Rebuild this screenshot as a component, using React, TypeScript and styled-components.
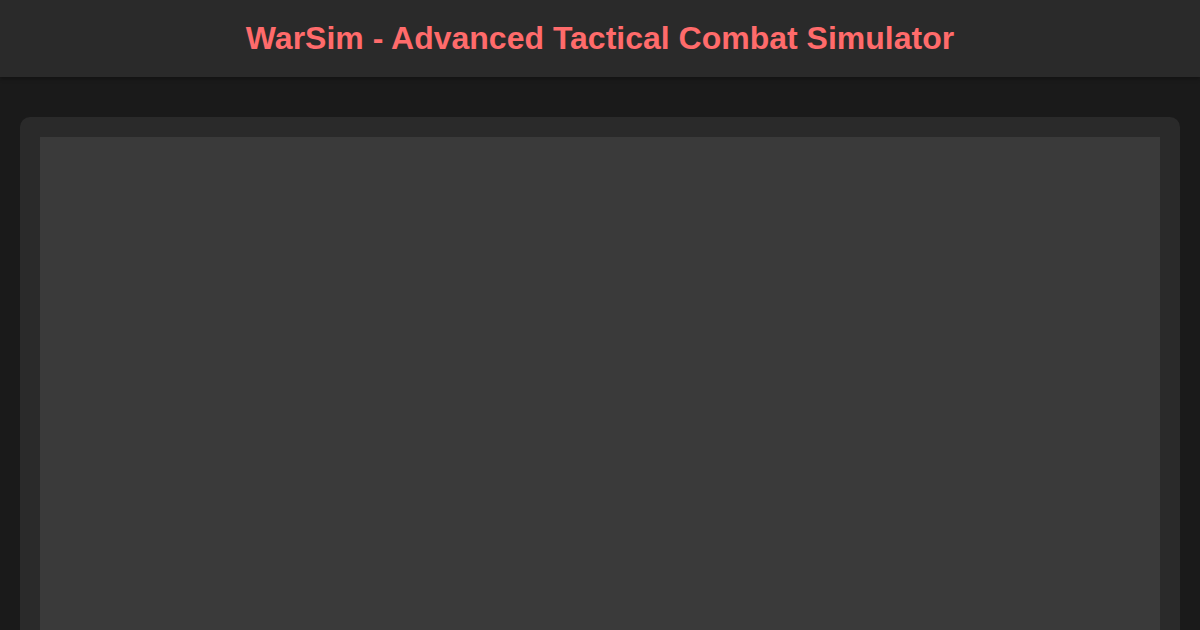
import React from "react";
import styled, { createGlobalStyle } from "styled-components";

const GlobalStyle = createGlobalStyle`
  html, body {
    margin: 0;
    padding: 0;
    background-color: #1a1a1a;
    font-family: "Liberation Sans", Arial, sans-serif;
    color: #ffffff;
  }
`;

const Header = styled.header`
  background-color: #2a2a2a;
  padding: 20px;
  text-align: center;
  box-shadow: 0 2px 4px rgba(0, 0, 0, 0.3);
  position: relative;
  z-index: 1;
`;

const Title = styled.h1`
  margin: 0;
  font-size: 32px;
  font-weight: bold;
  color: #ff6b6b;
`;

const Main = styled.main`
  padding: 40px 20px 20px;
`;

const BattlefieldCard = styled.section`
  background-color: #2a2a2a;
  border-radius: 10px;
  padding: 20px;
`;

const Battlefield = styled.div`
  background-color: #3a3a3a;
  height: 600px;
`;

export default function App() {
  return (
    <>
      <GlobalStyle />
      <Header>
        <Title>WarSim - Advanced Tactical Combat Simulator</Title>
      </Header>
      <Main>
        <BattlefieldCard>
          <Battlefield />
        </BattlefieldCard>
      </Main>
    </>
  );
}
